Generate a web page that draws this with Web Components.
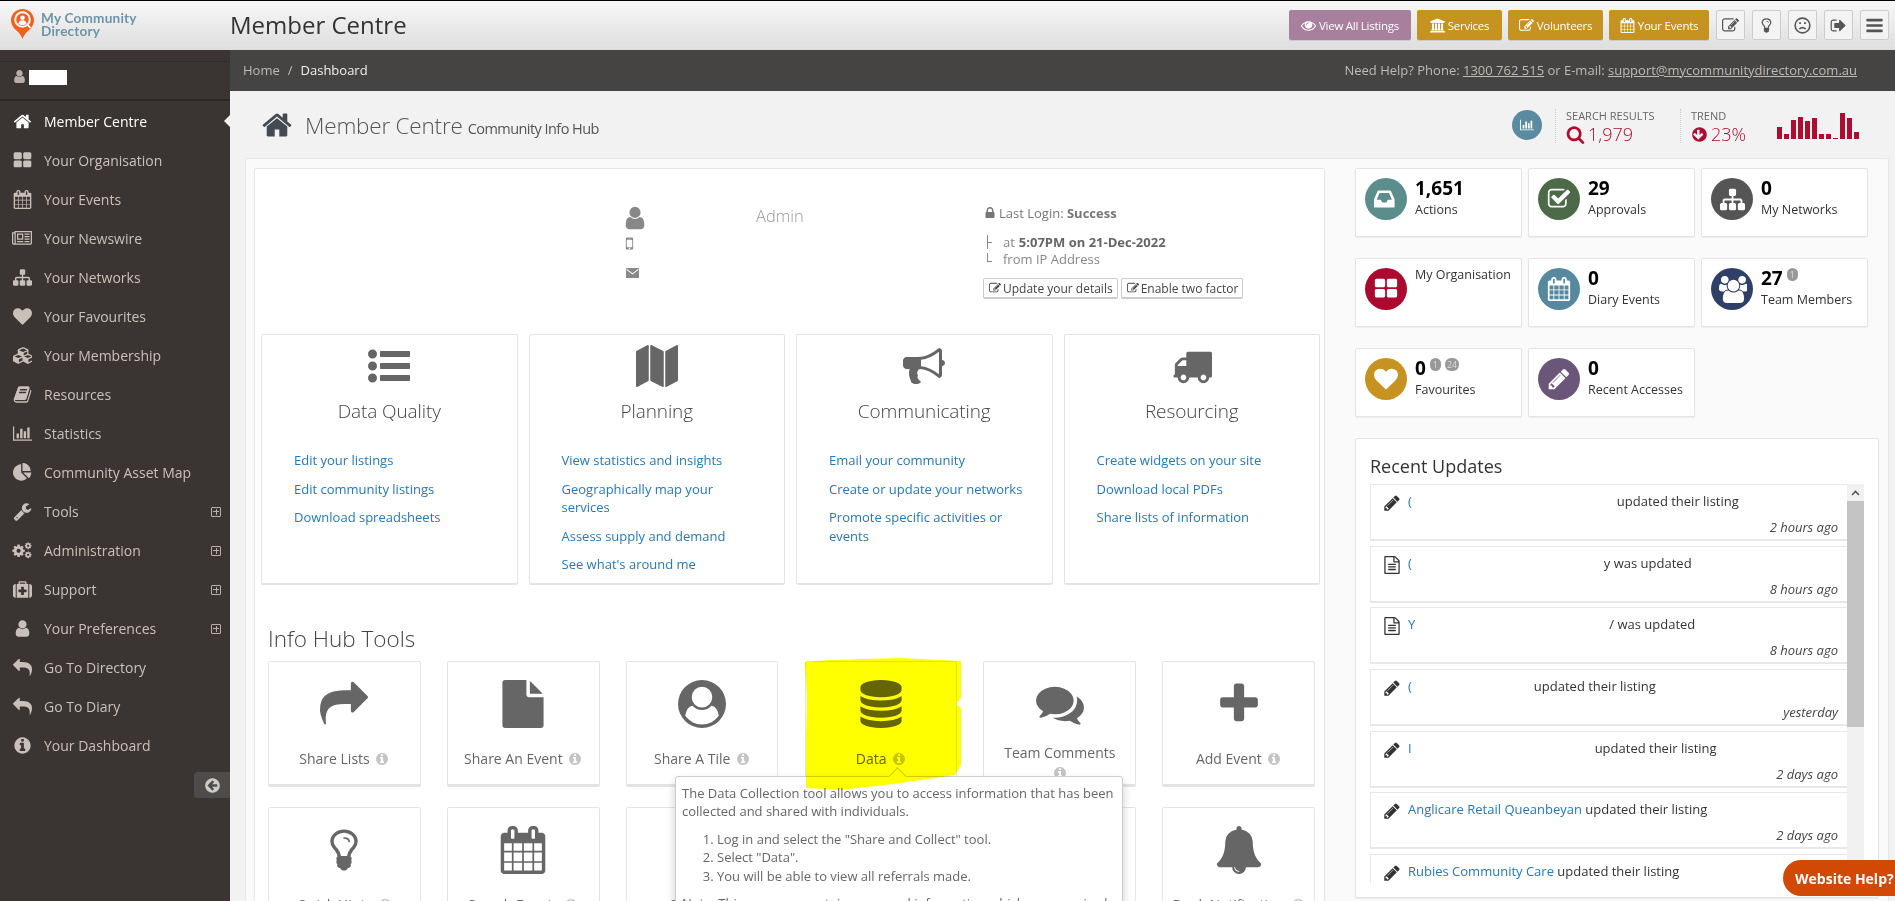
<!DOCTYPE html>
<html lang="en"><head><meta charset="utf-8"><title>Member Centre</title>
<style>
html,body{margin:0;padding:0;background:#f1f1f1;overflow:hidden}
body{font-family:"Open Sans","Liberation Sans",sans-serif;font-size:13px;color:#555}
</style></head><body>
<mc-app>
  <mc-header slot="header">
    <mc-hbtn color="#a97f9e" icon="eye" w="122">View All Listings</mc-hbtn>
    <mc-hbtn color="#c69220" icon="university" w="85">Services</mc-hbtn>
    <mc-hbtn color="#c69220" icon="edit" w="95">Volunteers</mc-hbtn>
    <mc-hbtn color="#c69220" icon="calendar" w="100">Your Events</mc-hbtn>
    <mc-ibtn icon="edit"></mc-ibtn><mc-ibtn icon="bulb"></mc-ibtn><mc-ibtn icon="frown"></mc-ibtn><mc-ibtn icon="signout"></mc-ibtn><mc-ibtn icon="bars"></mc-ibtn>
  </mc-header>
  <mc-sidebar slot="side">
    <mc-nav icon="home" active>Member Centre</mc-nav>
    <mc-nav icon="thlarge">Your Organisation</mc-nav>
    <mc-nav icon="calendar">Your Events</mc-nav>
    <mc-nav icon="news">Your Newswire</mc-nav>
    <mc-nav icon="sitemap">Your Networks</mc-nav>
    <mc-nav icon="heart">Your Favourites</mc-nav>
    <mc-nav icon="cubes">Your Membership</mc-nav>
    <mc-nav icon="book">Resources</mc-nav>
    <mc-nav icon="chart">Statistics</mc-nav>
    <mc-nav icon="pie">Community Asset Map</mc-nav>
    <mc-nav icon="wrench" plus>Tools</mc-nav>
    <mc-nav icon="cogs" plus>Administration</mc-nav>
    <mc-nav icon="medkit" plus>Support</mc-nav>
    <mc-nav icon="user" plus>Your Preferences</mc-nav>
    <mc-nav icon="reply">Go To Directory</mc-nav>
    <mc-nav icon="reply">Go To Diary</mc-nav>
    <mc-nav icon="info">Your Dashboard</mc-nav>
  </mc-sidebar>
  <mc-crumbs slot="main"></mc-crumbs>
  <mc-pagehead slot="main"></mc-pagehead>
  <mc-panel slot="main">
    <mc-card>
      <mc-userinfo></mc-userinfo>
      <mc-features>
        <mc-feature icon="list" title="Data Quality">
          <a>Edit your listings</a><a>Edit community listings</a><a>Download spreadsheets</a>
        </mc-feature>
        <mc-feature icon="map" title="Planning">
          <a>View statistics and insights</a><a>Geographically map your services</a><a>Assess supply and demand</a><a>See what's around me</a>
        </mc-feature>
        <mc-feature icon="bullhorn" title="Communicating">
          <a>Email your community</a><a>Create or update your networks</a><a>Promote specific activities or events</a>
        </mc-feature>
        <mc-feature icon="truck" title="Resourcing">
          <a>Create widgets on your site</a><a>Download local PDFs</a><a>Share lists of information</a>
        </mc-feature>
      </mc-features>
      <mc-tools heading="Info Hub Tools">
        <mc-tile icon="share">Share Lists</mc-tile>
        <mc-tile icon="file">Share An Event</mc-tile>
        <mc-tile icon="usercircle">Share A Tile</mc-tile>
        <mc-tile icon="database">Data</mc-tile>
        <mc-tile icon="comments" wrap>Team Comments</mc-tile>
        <mc-tile icon="plus">Add Event</mc-tile>
        <mc-tile icon="bulb">Quick Hints</mc-tile>
        <mc-tile icon="calendar">Search Events</mc-tile>
        <mc-tile icon="search">Search</mc-tile>
        <mc-tile icon="file"></mc-tile>
        <mc-tile icon="file"></mc-tile>
        <mc-tile icon="bell">Book Notification</mc-tile>
      </mc-tools>
    </mc-card>
    <mc-rightcol>
      <mc-stats>
        <mc-stat color="#5b8d8c" icon="inbox" num="1,651">Actions</mc-stat>
        <mc-stat color="#4c6a47" icon="check" num="29">Approvals</mc-stat>
        <mc-stat color="#555" icon="sitemap" num="0">My Networks</mc-stat>
        <mc-stat color="#ab0a2e" icon="thlarge">My Organisation</mc-stat>
        <mc-stat color="#56899f" icon="calendar" num="0">Diary Events</mc-stat>
        <mc-stat color="#2f4068" icon="users" num="27" badges="1">Team Members</mc-stat>
        <mc-stat color="#c69220" icon="heart" num="0" badges="1,24">Favourites</mc-stat>
        <mc-stat color="#6a5678" icon="pencil" num="0">Recent Accesses</mc-stat>
      </mc-stats>
      <mc-recent heading="Recent Updates">
        <mc-update icon="pencil" lead="(" gap="205" time="2 hours ago">updated their listing</mc-update>
        <mc-update icon="filetext" lead="(" gap="192" time="8 hours ago">y was updated</mc-update>
        <mc-update icon="filetext" lead="Y" gap="194" time="8 hours ago">/ was updated</mc-update>
        <mc-update icon="pencil" lead="(" gap="122" time="yesterday">updated their listing</mc-update>
        <mc-update icon="pencil" lead="I" gap="183" time="2 days ago">updated their listing</mc-update>
        <mc-update icon="pencil" link="Anglicare Retail Queanbeyan" time="2 days ago">updated their listing</mc-update>
        <mc-update icon="pencil" link="Rubies Community Care">updated their listing</mc-update>
      </mc-recent>
    </mc-rightcol>
  </mc-panel>
  <mc-tooltip slot="over">
    <p>The Data Collection tool allows you to access information that has been collected and shared with individuals.</p>
    <ol><li>Log in and select the "Share and Collect" tool.</li><li>Select "Data".</li><li>You will be able to view all referrals made.</li></ol>
    <p>Note: This message contains personal information which was required</p>
  </mc-tooltip>
  <mc-help slot="over">Website Help?</mc-help>
  <mc-highlight slot="over"></mc-highlight>
</mc-app>
<script>
const P={
home:"M1472 992v480q0 26-19 45t-45 19h-384v-384h-256v384h-384q-26 0-45-19t-19-45v-480q0-1 .5-3t.5-3l575-474 575 474q1 2 1 6zm223-69l-62 74q-8 9-21 11h-3q-13 0-21-7l-692-577-692 577q-12 8-24 7-13-2-21-11l-62-74q-8-10-7-23.500t11-21.500l719-599q32-26 76-26t76 26l244 204v-195q0-14 9-23t23-9h192q14 0 23 9t9 23v408l219 182q10 8 11 21.500t-7 23.500z",
user:"M1536 1399q0 109-62.500 187t-150.500 78h-854q-88 0-150.500-78t-62.500-187q0-85 8.500-160.500t31.500-152 58.500-131 94-89 134.500-34.500q131 128 313 128t313-128q76 0 134.500 34.500t94 89 58.500 131 31.500 152 8.500 160.500zm-256-887q0 159-112.500 271.500t-271.500 112.500-271.500-112.500-112.500-271.500 112.500-271.500 271.500-112.500 271.500 112.500 112.500 271.500z",
thlarge:"M832 1024v384q0 52-38 90t-90 38h-512q-52 0-90-38t-38-90v-384q0-52 38-90t90-38h512q52 0 90 38t38 90zm0-768v384q0 52-38 90t-90 38h-512q-52 0-90-38t-38-90v-384q0-52 38-90t90-38h512q52 0 90 38t38 90zm896 768v384q0 52-38 90t-90 38h-512q-52 0-90-38t-38-90v-384q0-52 38-90t90-38h512q52 0 90 38t38 90zm0-768v384q0 52-38 90t-90 38h-512q-52 0-90-38t-38-90v-384q0-52 38-90t90-38h512q52 0 90 38t38 90z",
calendar:"M192 1664h288v-288h-288v288zm352 0h320v-288h-320v288zm-352-352h288v-320h-288v320zm352 0h320v-320h-320v320zm-352-384h288v-288h-288v288zm736 736h320v-288h-320v288zm-384-736h320v-288h-320v288zm768 736h288v-288h-288v288zm-384-352h320v-320h-320v320zm-352-864v-288q0-13-9.500-22.500t-22.500-9.500h-64q-13 0-22.500 9.500t-9.500 22.500v288q0 13 9.500 22.500t22.500 9.500h64q13 0 22.500-9.500t9.500-22.500zm736 864h288v-320h-288v320zm-384-384h320v-288h-320v288zm384 0h288v-288h-288v288zm32-480v-288q0-13-9.500-22.500t-22.500-9.500h-64q-13 0-22.500 9.500t-9.500 22.500v288q0 13 9.500 22.500t22.500 9.500h64q13 0 22.500-9.500t9.500-22.500zm384-64v1280q0 52-38 90t-90 38h-1408q-52 0-90-38t-38-90v-1280q0-52 38-90t90-38h128v-96q0-66 47-113t113-47h64q66 0 113 47t47 113v96h384v-96q0-66 47-113t113-47h64q66 0 113 47t47 113v96h128q52 0 90 38t38 90z",
heart:"M896 1664q-26 0-44-18l-624-602q-10-8-27.500-26t-55.500-65.500-68-97.500-53.500-121-23.500-138q0-220 127-344t351-124q62 0 126.500 21.500t120 58 95.500 68.500 76 68q36-36 76-68t95.500-68.500 120-58 126.500-21.500q224 0 351 124t127 344q0 221-229 450l-623 600q-18 18-44 18z",
chart:"M640 896v512h-256v-512h256zm384-512v1024h-256v-1024h256zm1024 1152v128h-2048v-1536h128v1408h1920zm-640-896v768h-256v-768h256zm384-384v1152h-256v-1152h256z",
pie:"M768 890l546 546q-106 108-247.500 168t-298.500 60q-209 0-385.500-103t-279.500-279.500-103-385.500 103-385.500 279.500-279.500 385.500-103v762zm187 2h773q0 157-60 298.500t-168 247.500zm709-128h-768v-768q209 0 385.500 103t279.500 279.500 103 385.500z",
wrench:"M448 1472q0-26-19-45t-45-19-45 19-19 45 19 45 45 19 45-19 19-45zm644-420l-682 682q-37 37-90 37-52 0-91-37l-106-108q-38-36-38-90 0-53 38-91l681-681q39 98 114.500 173.500t173.500 114.500zm634-435q0 39-23 106-47 134-164.500 217.500t-258.500 83.500q-185 0-316.500-131.500t-131.500-316.500 131.500-316.500 316.500-131.500q58 0 121.500 16.500t107.500 46.500q16 11 16 28t-16 28l-293 169v224l193 107q5-3 79-48.500t135.500-81 70.500-35.500q15 0 23.500 10t8.500 25z",
share:"M1792 640q0 26-19 45l-512 512q-19 19-45 19t-45-19-19-45v-256h-224q-98 0-175.500 6t-154 21.500-133 42.500-105.500 69.500-80 101-48.500 138.500-17.500 181q0 55 5 123 0 6 2.500 23.500t2.500 26.500q0 15-8.500 25t-23.500 10q-16 0-28-17-7-9-13-22t-13.500-30-10.500-24q-127-285-127-451 0-199 53-333 162-403 875-403h224v-256q0-26 19-45t45-19 45 19l512 512q19 19 19 45z",
reply:"M1792 1120q0 166-127 451-3 7-10.500 24t-13.500 30-13 22q-12 17-28 17-15 0-23.500-10t-8.500-25q0-9 2.500-26.500t2.500-23.500q5-68 5-123 0-101-17.500-181t-48.500-138.500-80-101-105.500-69.500-133-42.500-154-21.500-175.500-6h-224v256q0 26-19 45t-45 19-45-19l-512-512q-19-19-19-45t19-45l512-512q19-19 45-19t45 19 19 45v256h224q713 0 875 403 53 134 53 333z",
info:"M1152 1376v-160q0-14-9-23t-23-9h-96v-512q0-14-9-23t-23-9h-320q-14 0-23 9t-9 23v160q0 14 9 23t23 9h96v320h-96q-14 0-23 9t-9 23v160q0 14 9 23t23 9h448q14 0 23-9t9-23zm-128-896v-160q0-14-9-23t-23-9h-192q-14 0-23 9t-9 23v160q0 14 9 23t23 9h192q14 0 23-9t9-23zm640 416q0 209-103 385.500t-279.500 279.500-385.500 103-385.500-103-279.500-279.500-103-385.500 103-385.500 279.500-279.500 385.500-103 385.500 103 279.500 279.500 103 385.500z",
plus:"M1600 736v192q0 40-28 68t-68 28h-416v416q0 40-28 68t-68 28h-192q-40 0-68-28t-28-68v-416h-416q-40 0-68-28t-28-68v-192q0-40 28-68t68-28h416v-416q0-40 28-68t68-28h192q40 0 68 28t28 68v416h416q40 0 68 28t28 68z",
file:"M1152 512v-472q22 14 36 28l408 408q14 14 28 36h-472zm-128 32q0 40 28 68t68 28h544v1056q0 40-28 68t-68 28h-1344q-40 0-68-28t-28-68v-1600q0-40 28-68t68-28h800v544z",
database:"M896 768q237 0 443-43t325-127v170q0 69-103 128t-280 93.500-385 34.500-385-34.500-280-93.500-103-128v-170q119 84 325 127t443 43zm0 768q237 0 443-43t325-127v170q0 69-103 128t-280 93.500-385 34.500-385-34.500-280-93.500-103-128v-170q119 84 325 127t443 43zm0-384q237 0 443-43t325-127v170q0 69-103 128t-280 93.500-385 34.500-385-34.500-280-93.500-103-128v-170q119 84 325 127t443 43zm0-1152q208 0 385 34.500t280 93.500 103 128v128q0 69-103 128t-280 93.500-385 34.500-385-34.500-280-93.500-103-128v-128q0-69 103-128t280-93.500 385-34.500z",
bell:"M912 1696q0-16-16-16-59 0-101.500-42.500t-42.500-101.500q0-16-16-16t-16 16q0 73 51.500 124.500t124.500 51.500q16 0 16-16zm816-288q0 52-38 90t-90 38h-448q0 106-75 181t-181 75-181-75-75-181h-448q-52 0-90-38t-38-90q50-42 91-88t85-119.500 74.500-158.500 50-206 19.500-260q0-152 117-282.500t307-158.500q-8-19-8-39 0-40 28-68t68-28 68 28 28 68q0 20-8 39 190 28 307 158.500t117 282.500q0 139 19.500 260t50 206 74.500 158.500 85 119.500 91 88z",
bulb:"M1120 576q0 13-9.500 22.500t-22.500 9.500-22.500-9.500-9.500-22.500q0-46-54-71t-106-25q-13 0-22.500-9.500t-9.500-22.500 9.500-22.500 22.500-9.500q50 0 99.500 16t87 54 37.500 90zm160 0q0-72-34.500-134t-90-101.500-123-62-136.500-22.500-136.500 22.500-123 62-90 101.500-34.500 134q0 101 68 180 10 11 30.500 33t30.500 33q128 153 141 298h228q13-145 141-298 10-11 30.500-33t30.500-33q68-79 68-180zm128 0q0 155-103 268-45 49-74.500 87t-59.500 95.500-34 107.500q47 28 47 82 0 37-25 64 25 27 25 64 0 52-45 81 13 23 13 47 0 46-31.500 71t-77.500 25q-20 44-60 70t-87 26-87-26-60-70q-46 0-77.500-25t-31.500-71q0-24 13-47-45-29-45-81 0-37 25-64-25-27-25-64 0-54 47-82-4-50-34-107.500t-59.500-95.500-74.500-87q-103-113-103-268 0-99 44.500-184.500t117-142 164-89 186.500-32.500 186.500 32.500 164 89 117 142 44.500 184.500z",
comments:"M1408 768q0 139-94 257t-256.500 186.500-353.500 68.500q-86 0-176-16-124 88-278 128-36 9-86 16h-3q-11 0-20.500-8t-11.500-21q-1-3-1-6.500t.5-6.500 2-6l2.500-5 3.500-5.500 4-5 4.500-5 4-4.500q5-6 23-25t26-29.500 22.500-29 25-38.500 20.500-44q-124-72-195-177t-71-224q0-139 94-257t256.500-186.500 353.500-68.500 353.500 68.500 256.500 186.500 94 257zm384 256q0 120-71 224.500t-195 176.500q10 24 20.500 44t25 38.500 22.500 29 26 29.500 23 25q1 1 4 4.500t4.500 5 4 5 3.500 5.500l2.500 5 2 6 .5 6.500-1 6.500q-3 14-13 22t-22 7q-50-7-86-16-154-40-278-128-90 16-176 16-271 0-472-132 58 4 88 4 161 0 309-45t264-129q125-92 192-212t67-254q0-77-23-152 129 71 204 178t75 230z",
usercircle:"M1523 1339q-22-155-87.500-257.500t-184.500-118.500q-67 74-159.500 115.500t-195.500 41.500-195.500-41.500-159.500-115.500q-119 16-184.500 118.500t-87.500 257.500q106 150 271 237.500t356 87.500 356-87.500 271-237.500zm-243-699q0-159-112.500-271.500t-271.500-112.500-271.500 112.500-112.500 271.500 112.500 271.500 271.500 112.500 271.500-112.500 112.500-271.500zm512 256q0 182-71 347.500t-190.500 286-285.500 191.500-349 71q-182 0-348-71t-286-191-191-286-71-348 71-348 191-286 286-191 348-71 348 71 286 191 191 286 71 348z",
truck:"M640 1408q0-52-38-90t-90-38-90 38-38 90 38 90 90 38 90-38 38-90zm-384-512h384v-256h-158q-13 0-22 9l-195 195q-9 9-9 22v30zm1280 512q0-52-38-90t-90-38-90 38-38 90 38 90 90 38 90-38 38-90zm256-1088v1024q0 15-4 26.500t-13.500 18.500-16.500 11.500-23.500 6-22.500 2-25.500 0-22.500-.5q0 106-75 181t-181 75-181-75-75-181h-384q0 106-75 181t-181 75-181-75-75-181h-64q-3 0-22.500.5t-25.500 0-22.500-2-23.500-6-16.500-11.500-13.500-18.500-4-26.500q0-26 19-45t45-19v-320q0-8-.5-35t0-38 2.500-34.500 6.500-37 14-30.500 22.500-30l198-198q19-19 50.500-32t58.500-13h160v-192q0-26 19-45t45-19h1024q26 0 45 19t19 45z",
list:"M384 1408q0 80-56 136t-136 56-136-56-56-136 56-136 136-56 136 56 56 136zm0-512q0 80-56 136t-136 56-136-56-56-136 56-136 136-56 136 56 56 136zm1408 416v192q0 13-9.500 22.500t-22.500 9.500h-1216q-13 0-22.500-9.500t-9.500-22.500v-192q0-13 9.500-22.500t22.500-9.500h1216q13 0 22.500 9.500t9.500 22.500zm-1408-928q0 80-56 136t-136 56-136-56-56-136 56-136 136-56 136 56 56 136zm1408 416v192q0 13-9.500 22.500t-22.500 9.500h-1216q-13 0-22.500-9.500t-9.500-22.500v-192q0-13 9.500-22.500t22.500-9.500h1216q13 0 22.500 9.500t9.500 22.500zm0-512v192q0 13-9.500 22.500t-22.500 9.500h-1216q-13 0-22.500-9.500t-9.500-22.500v-192q0-13 9.500-22.500t22.500-9.500h1216q13 0 22.500 9.500t9.500 22.500z",
map:"M512 0q13 0 22.500 9.500t9.500 22.500v1472q0 20-17 28l-480 256q-7 4-15 4-13 0-22.500-9.500t-9.500-22.500v-1472q0-20 17-28l480-256q7-4 15-4zm1248 0q13 0 22.500 9.500t9.500 22.500v1472q0 20-17 28l-480 256q-7 4-15 4-13 0-22.500-9.500t-9.500-22.500v-1472q0-20 17-28l480-256q7-4 15-4zm-1120 0q8 0 14 3l512 256q18 10 18 29v1472q0 13-9.500 22.500t-22.500 9.500q-8 0-14-3l-512-256q-18-10-18-29v-1472q0-13 9.500-22.500t22.500-9.500z",
bullhorn:"M1664 640q53 0 90.500 37.500t37.500 90.500-37.500 90.500-90.500 37.500v384q0 52-38 90t-90 38q-417-347-812-380-58 19-91 66t-31 100.500 40 92.500q-20 33-23 65.500t6 58 33.500 55 48 50 61.500 50.500q-29 58-111.500 83t-168.500 11.500-132-55.500q-7-23-29.500-87.500t-32-94.500-23-89-15-101 3.500-98.500 22-110.500h-122q-66 0-113-47t-47-113v-192q0-66 47-113t113-47h480q435 0 896-384 52 0 90 38t38 90v384zm-128 604v-954q-394 302-768 343v270q377 42 768 341z",
pencil:"M491 1536l91-91-235-235-91 91v107h128v128h107zm523-928q0-22-22-22-10 0-17 7l-542 542q-7 7-7 17 0 22 22 22 10 0 17-7l542-542q7-7 7-17zm-54-192l416 416-832 832h-416v-416zm683 96q0 53-37 90l-166 166-416-416 166-165q36-38 90-38 53 0 91 38l235 234q37 39 37 91z",
edit:"M888 1184l116-116-152-152-116 116v56h96v96h56zm440-720q-16-16-33 1l-350 350q-17 17-1 33t33-1l350-350q17-17 1-33zm80 594v190q0 119-84.500 203.500t-203.500 84.500h-832q-119 0-203.500-84.500t-84.500-203.500v-832q0-119 84.500-203.500t203.500-84.500h832q63 0 117 25 15 7 18 23 3 17-9 29l-49 49q-14 14-32 8-23-6-45-6h-832q-66 0-113 47t-47 113v832q0 66 47 113t113 47h832q66 0 113-47t47-113v-126q0-13 9-22l64-64q15-15 35-7t20 29zm-96-738l288 288-672 672h-288v-288zm444 132l-92 92-288-288 92-92q27-27 68-27t68 27l152 152q27 27 27 68t-27 68z",
eye:"M1664 960q-152-236-381-353 61 104 61 225 0 185-131.500 316.500t-316.500 131.500-316.500-131.500-131.500-316.500q0-121 61-225-229 117-381 353 133 205 333.500 326.500t434.500 121.500 434.500-121.500 333.500-326.500zm-720-384q0-20-14-34t-34-14q-125 0-214.500 89.500t-89.500 214.500q0 20 14 34t34 14 34-14 14-34q0-86 61-147t147-61q20 0 34-14t14-34zm848 384q0 34-20 69-140 230-376.500 368.500t-499.500 138.500-499.500-139-376.500-368q-20-35-20-69t20-69q140-229 376.500-368t499.500-139 499.500 139 376.500 368q20 35 20 69z",
check:"M1472 930v318q0 119-84.500 203.500t-203.500 84.500h-832q-119 0-203.500-84.500t-84.500-203.500v-832q0-119 84.500-203.500t203.500-84.500h832q63 0 117 25 15 7 18 23 3 16-9 28l-49 49q-10 10-23 10-3 0-9-2-23-6-45-6h-832q-66 0-113 47t-47 113v832q0 66 47 113t113 47h832q66 0 113-47t47-113v-254q0-13 9-22l64-64q10-10 23-10 6 0 12 3 20 8 20 29zm231-489l-814 814q-24 24-57 24t-57-24l-430-430q-24-24-24-57t24-57l110-110q24-24 57-24t57 24l263 263 647-647q24-24 57-24t57 24l110 110q24 24 24 57t-24 57z",
sitemap:"M1792 1248v320q0 40-28 68t-68 28h-320q-40 0-68-28t-28-68v-320q0-40 28-68t68-28h96v-192h-512v192h96q40 0 68 28t28 68v320q0 40-28 68t-68 28h-320q-40 0-68-28t-28-68v-320q0-40 28-68t68-28h96v-192h-512v192h96q40 0 68 28t28 68v320q0 40-28 68t-68 28h-320q-40 0-68-28t-28-68v-320q0-40 28-68t68-28h96v-192q0-52 38-90t90-38h512v-192h-96q-40 0-68-28t-28-68v-320q0-40 28-68t68-28h320q40 0 68 28t28 68v320q0 40-28 68t-68 28h-96v192h512q52 0 90 38t38 90v192h96q40 0 68 28t28 68z",
users:"M657 896q-162 5-265 128h-134q-82 0-138-40.500t-56-118.500q0-353 124-353 6 0 43.500 21t97.500 42.500 119 21.500q67 0 133-23-5 37-5 66 0 139 81 256zm1071 637q0 120-73 189.500t-194 69.500h-874q-121 0-194-69.500t-73-189.500q0-53 3.500-103.500t14-109 26.500-108.500 43-97.500 62-81 85.500-53.500 111.500-20q10 0 43 21.500t73 48 107 48 135 21.500 135-21.500 107-48 73-48 43-21.500q61 0 111.500 20t85.500 53.500 62 81 43 97.500 26.500 108.500 14 109 3.500 103.500zm-1024-1277q0 106-75 181t-181 75-181-75-75-181 75-181 181-75 181 75 75 181zm704 384q0 159-112.500 271.500t-271.500 112.500-271.500-112.500-112.500-271.500 112.500-271.500 271.500-112.500 271.500 112.500 112.500 271.500zm576 225q0 78-56 118.500t-138 40.500h-134q-103-123-265-128 81-117 81-256 0-29-5-66 66 23 133 23 59 0 119-21.500t97.500-42.500 43.500-21q124 0 124 353zm-128-609q0 106-75 181t-181 75-181-75-75-181 75-181 181-75 181 75 75 181z",
inbox:"M1023 960h316q-1-3-2.500-8.500t-2.500-7.500l-212-496h-708l-212 496q-1 3-2.500 8.500t-2.500 7.500h316l95 192h320zm513 30v482q0 26-19 45t-45 19h-1408q-26 0-45-19t-19-45v-482q0-62 25-123l238-552q10-25 36.500-42t52.500-17h832q26 0 52.500 17t36.500 42l238 552q25 61 25 123z",
news:"M1024 512h-384v384h384v-384zm128 640v128h-640v-128h640zm0-768v640h-640v-640h640zm640 768v128h-512v-128h512zm0-256v128h-512v-128h512zm0-256v128h-512v-128h512zm0-256v128h-512v-128h512zm-1536 960v-960h-128v960q0 26 19 45t45 19 45-19 19-45zm1664 0v-1088h-1536v1088q0 33-11 64h1483q26 0 45-19t19-45zm128-1216v1216q0 80-56 136t-136 56h-1664q-80 0-136-56t-56-136v-1088h256v-128h1792z",
cubes:"M640 1632l384-192v-314l-384 164v342zm-64-454l404-173-404-173-404 173zm1088 454l384-192v-314l-384 164v342zm-64-454l404-173-404-173-404 173zm-448-293l384-165v-266l-384 164v267zm-64-379l441-189-441-189-441 189zm1088 518v416q0 36-19 67t-52 47l-448 224q-25 14-57 14t-57-14l-448-224q-4-2-7-4-2 2-7 4l-448 224q-25 14-57 14t-57-14l-448-224q-33-16-52-47t-19-67v-416q0-38 21.500-70t56.500-48l434-186v-400q0-38 21.500-70t56.500-48l448-192q23-10 50-10t50 10l448 192q35 16 56.500 48t21.500 70v400l434 186q36 16 57 48t21 70z",
book:"M1703 478q40 57 18 129l-275 906q-19 64-76.500 107.500t-122.500 43.500h-923q-77 0-148.500-53.500t-99.500-131.500q-24-67-2-127 0-4 3-27t4-37q1-8-3-21.500t-3-19.500q2-11 8-21t16.500-23.500 16.500-23.500q23-38 45-91.500t30-91.500q3-10 .5-30t-.5-28q3-11 17-28t17-23q21-36 42-92t25-90q1-9-2.500-32t.5-28q4-13 22-30.500t22-22.500q19-26 42.500-84.500t27.500-96.500q1-8-3-25.500t-2-26.500q2-8 9-18t18-23 17-21q8-12 16.500-30.500t15-35 16-36 19.500-32 26.500-23.500 36-11.500 47.500 5.500l-1 3q38-9 51-9h761q74 0 114 56t18 130l-274 906q-36 119-71.500 153.500t-128.500 34.500h-869q-27 0-38 15-11 16-1 43 24 70 144 70h923q29 0 56-15.500t35-41.500l300-987q7-22 5-57 38 15 59 43zm-1064 2q-4 13 2 22.500t20 9.500h608q13 0 25.500-9.500t16.500-22.500l21-64q4-13-2-22.500t-20-9.500h-608q-13 0-25.500 9.500t-16.500 22.500zm-83 256q-4 13 2 22.500t20 9.500h608q13 0 25.500-9.500t16.500-22.500l21-64q4-13-2-22.500t-20-9.500h-608q-13 0-25.500 9.500t-16.500 22.500z",
cog:"M1152 896q0-106-75-181t-181-75-181 75-75 181 75 181 181 75 181-75 75-181zm512-109v222q0 12-8 23t-20 13l-185 28q-19 54-39 91 35 50 107 138 10 12 10 25t-9 23q-27 37-99 108t-94 71q-12 0-26-9l-138-108q-44 23-91 38-16 136-29 186-7 28-36 28h-222q-14 0-24.500-8.500t-11.500-21.500l-28-184q-49-16-90-37l-141 107q-10 9-25 9-14 0-25-11-126-114-165-168-7-10-7-23 0-12 8-23 15-21 51-66.500t54-70.500q-27-50-41-99l-183-27q-13-2-21-12.500t-8-23.500v-222q0-12 8-23t19-13l186-28q14-46 39-92-40-57-107-138-10-12-10-24 0-10 9-23 26-36 98.500-107.500t94.500-71.500q13 0 26 10l138 107q44-23 91-38 16-136 29-186 7-28 36-28h222q14 0 24.500 8.500t11.500 21.500l28 184q49 16 90 37l142-107q9-9 24-9 13 0 25 10 129 119 165 170 7 8 7 22 0 12-8 23-15 21-51 66.500t-54 70.500q26 50 41 98l183 28q13 2 21 12.500t8 23.500z",
medkit:"M1280 1120v-192q0-14-9-23t-23-9h-224v-224q0-14-9-23t-23-9h-192q-14 0-23 9t-9 23v224h-224q-14 0-23 9t-9 23v192q0 14 9 23t23 9h224v224q0 14 9 23t23 9h192q14 0 23-9t9-23v-224h224q14 0 23-9t9-23zm-640-768h512v-128h-512v128zm-384 32v1280h-32q-92 0-158-66t-66-158v-832q0-92 66-158t158-66h32zm1184 0v1280h-1088v-1280h160v-160q0-40 28-68t68-28h576q40 0 68 28t28 68v160h160zm352 224v832q0 92-66 158t-158 66h-32v-1280h32q92 0 158 66t66 158z",
acleft:"M1408 960v-128q0-26-19-45t-45-19h-502l189-189q19-19 19-45t-19-45l-91-91q-18-18-45-18t-45 18l-362 362-91 91q-18 18-18 45t18 45l91 91 362 362q18 18 45 18t45-18l91-91q18-18 18-45t-18-45l-189-189h502q26 0 45-19t19-45zm256-64q0 209-103 385.500t-279.500 279.500-385.500 103-385.500-103-279.500-279.500-103-385.500 103-385.500 279.500-279.500 385.500-103 385.500 103 279.500 279.500 103 385.500z",
acdown:"M1284 897q0-27-18-45l-91-91q-18-18-45-18t-45 18l-189 189v-502q0-26-19-45t-45-19h-128q-26 0-45 19t-19 45v502l-189-189q-19-19-45-19t-45 19l-91 91q-18 18-18 45t18 45l362 362 91 91q18 18 45 18t45-18l91-91 362-362q18-18 18-45zm380-1q0 209-103 385.500t-279.500 279.500-385.500 103-385.500-103-279.500-279.500-103-385.500 103-385.500 279.500-279.500 385.500-103 385.500 103 279.500 279.500 103 385.500z",
search:"M1216 832q0-185-131.500-316.500t-316.500-131.500-316.500 131.500-131.500 316.500 131.500 316.500 316.500 131.500 316.500-131.500 131.500-316.500zm512 832q0 52-38 90t-90 38q-54 0-90-38l-343-342q-179 124-399 124-143 0-273.500-55.500t-225-150-150-225-55.500-273.500 55.500-273.500 150-225 225-150 273.500-55.500 273.500 55.500 225 150 150 225 55.500 273.500q0 220-124 399l343 343q37 37 37 90z",
university:"M960 0l960 384v128h-128q0 26-20.500 45t-48.500 19h-1526q-28 0-48.500-19t-20.500-45h-128v-128zm-704 640h256v768h128v-768h256v768h128v-768h256v768h128v-768h256v768h59q28 0 48.500 19t20.500 45v64h-1664v-64q0-26 20.500-45t48.500-19h59v-768zm1595 960q28 0 48.500 19t20.500 45v128h-1920v-128q0-26 20.500-45t48.500-19h1782z",
signout:"M704 1440q0 4 1 20t.5 26.500-3 23.500-10 19.500-20.500 6.500h-320q-119 0-203.500-84.500t-84.500-203.500v-704q0-119 84.500-203.500t203.500-84.500h320q13 0 22.500 9.500t9.500 22.500q0 4 1 20t.5 26.500-3 23.500-10 19.500-20.500 6.500h-320q-66 0-113 47t-47 113v704q0 66 47 113t113 47h312l11.500 1 11.500 3 8 5.500 7 9 2 13.500zm928-544q0 26-19 45l-544 544q-19 19-45 19t-45-19-19-45v-288h-448q-26 0-45-19t-19-45v-384q0-26 19-45t45-19h448v-288q0-26 19-45t45-19 45 19l544 544q19 19 19 45z",
bars:"M1664 1344v128q0 26-19 45t-45 19h-1408q-26 0-45-19t-19-45v-128q0-26 19-45t45-19h1408q26 0 45 19t19 45zm0-512v128q0 26-19 45t-45 19h-1408q-26 0-45-19t-19-45v-128q0-26 19-45t45-19h1408q26 0 45 19t19 45zm0-512v128q0 26-19 45t-45 19h-1408q-26 0-45-19t-19-45v-128q0-26 19-45t45-19h1408q26 0 45 19t19 45z",
lock:"M640 768h512v-192q0-106-75-181t-181-75-181 75-75 181v192zm832 96v576q0 40-28 68t-68 28h-960q-40 0-68-28t-28-68v-576q0-40 28-68t68-28h32v-192q0-184 132-316t316-132 316 132 132 316v192h32q40 0 68 28t28 68z",
mobile:"M976 1408q0-33-23.500-56.500t-56.500-23.500-56.500 23.500-23.500 56.500 23.500 56.500 56.500 23.500 56.500-23.500 23.500-56.500zm208-160v-704q0-13-9.500-22.500t-22.500-9.500h-512q-13 0-22.500 9.500t-9.500 22.500v704q0 13 9.500 22.500t22.500 9.500h512q13 0 22.500-9.500t9.500-22.500zm-192-848q0-16-16-16h-160q-16 0-16 16t16 16h160q16 0 16-16zm288-16v1024q0 52-38 90t-90 38h-512q-52 0-90-38t-38-90v-1024q0-52 38-90t90-38h512q52 0 90 38t38 90z",
filetext:"M1596 380q28 28 48 76t20 88v1152q0 40-28 68t-68 28h-1344q-40 0-68-28t-28-68v-1600q0-40 28-68t68-28h896q40 0 88 20t76 48zm-444-244v376h376q-10-29-22-41l-313-313q-12-12-41-22zm384 1528v-1024h-416q-40 0-68-28t-28-68v-416h-768v1536h1280zm-1024-864q0-14 9-23t23-9h704q14 0 23 9t9 23v64q0 14-9 23t-23 9h-704q-14 0-23-9t-9-23v-64zm736 224q14 0 23 9t9 23v64q0 14-9 23t-23 9h-704q-14 0-23-9t-9-23v-64q0-14 9-23t23-9h704zm0 256q14 0 23 9t9 23v64q0 14-9 23t-23 9h-704q-14 0-23-9t-9-23v-64q0-14 9-23t23-9h704z"
};
const VB={chart:"0 0 2048 1792",news:"0 0 2048 1792",cubes:"0 0 2048 1792",university:"0 0 1920 1792",users:"0 0 1920 1792"};
function svg(n,s,extra=""){
  if(n==="frown")return `<svg width="${s}" height="${s}" viewBox="0 0 24 24" fill="none" stroke="currentColor" stroke-width="2.2" ${extra}><circle cx="12" cy="12" r="10.4"/><path d="M7.5 17q4.500-4 9 0"/><path d="M8.500 7.500v2.500M15.500 7.500v2.500" stroke-width="2.600"/></svg>`;
  if(n==="mail")return `<svg width="${s}" height="${s*.8}" viewBox="0 0 20 16" ${extra}><rect width="20" height="16" rx="1.500" fill="currentColor"/><path d="M1 2l9 7 9-7" fill="none" stroke="#fff" stroke-width="1.600"/></svg>`;
  if(n==="cogs")return `<svg width="${s}" height="${s}" viewBox="0 0 2048 1792" fill="currentColor" ${extra}><g transform="translate(-60 240) scale(.82)"><path d="${P.cog}"/></g><g transform="translate(1250 60) scale(.45)"><path d="${P.cog}"/></g><g transform="translate(1250 980) scale(.45)"><path d="${P.cog}"/></g></svg>`;
  return `<svg width="${s}" height="${s}" viewBox="${VB[n]||"0 0 1792 1792"}" fill="currentColor" ${extra}><path d="${P[n]}" fill-rule="evenodd"/></svg>`;
}
function def(name,css,html){
  customElements.define(name,class extends HTMLElement{
    connectedCallback(){
      if(this.shadowRoot)return;
      const r=this.attachShadow({mode:"open"});
      r.innerHTML=`<style>${css}</style>`+(typeof html==="function"?html(this):html);
    }
  });
}
const A=(e,n,d="")=>e.getAttribute(n)??d;

def("mc-app",`:host{display:grid;grid-template-columns:230px 1665px;grid-template-rows:50px 851px;width:1895px;height:901px;overflow:hidden;position:relative;font-family:"Open Sans","Liberation Sans",sans-serif}
.h{grid-column:1/3;display:block}.s{display:block;min-height:0}.m{display:flex;flex-direction:column;min-height:0;background:#f2f2f2;overflow:hidden}`,
`<div class="h"><slot name="header"></slot></div><div class="s"><slot name="side"></slot></div><div class="m"><slot name="main"></slot></div><slot name="over"></slot>`);

def("mc-header",`:host{display:flex;box-sizing:border-box;height:50px;border-top:1px solid #000;background:linear-gradient(#f7f7f7,#dedede);align-items:center}
.logo{width:230px;flex:none;display:flex;align-items:center;height:100%;padding-left:11px;box-sizing:border-box;gap:7px}
.lt{font:700 13.6px/13px Lato,"Open Sans",sans-serif;color:#6d95a8;letter-spacing:.2px;margin-top:-2px}
h1{margin:0;font:400 24px/1 "Open Sans",sans-serif;color:#333;flex:1;margin-top:-2px}
.b{display:flex;gap:6px;padding-right:6px;margin-top:-1px;align-items:center}
::slotted(mc-ibtn){margin-left:1px}`,
`<div class="logo"><svg width="23" height="30" viewBox="0 0 23 30" style="margin-top:-3px"><path fill="#f2601f" d="M11.500 0C5 0 0 5 0 11.300c0 4.800 3 8.200 6 10.700 2.300 2 4.200 4.500 5.500 8 1.300-3.500 3.200-6 5.500-8 3-2.500 6-5.900 6-10.700C23 5 18 0 11.500 0z"/><circle cx="11.500" cy="10.500" r="7.300" fill="none" stroke="#fff" stroke-width="2"/><circle cx="11.500" cy="8.800" r="2.300" fill="#fff"/><path fill="#fff" d="M7.300 14.500c.6-2.400 2.200-3.300 4.200-3.300s3.600.9 4.200 3.300c-1.100 1-2.600 1.500-4.200 1.500s-3.100-.5-4.200-1.500z"/><path stroke="#fff" stroke-width="1.800" d="M16.500 15.800l3 3"/></svg><div class="lt">My Community<br>Directory</div></div><h1>Member Centre</h1><div class="b"><slot></slot></div>`);

def("mc-hbtn",`:host{display:flex;align-items:center;justify-content:center;gap:3px;box-sizing:border-box;height:30px;border-radius:2px;color:#fff;font-size:11.500px;letter-spacing:-.25px;white-space:nowrap;box-shadow:0 1px 0 rgba(0,0,0,.1)}`,
e=>`<style>:host{background:${A(e,"color")};width:${A(e,"w")}px}</style>${svg(A(e,"icon"),15)}<slot></slot>`);
def("mc-ibtn",`:host{display:flex;align-items:center;justify-content:center;box-sizing:border-box;width:29px;height:30px;border:1px solid #ccc;border-radius:2px;background:#f3f3f3;color:#555}`,
e=>svg(A(e,"icon"),A(e,"icon")==="bars"?19:17));

def("mc-sidebar",`:host{display:block;box-sizing:border-box;height:851px;background:#3a3533;position:relative;font-size:14px;padding-top:11px}
.u{box-sizing:border-box;height:40px;border-top:1px solid #302c2a;border-bottom:2px solid #2a2726;display:flex;align-items:flex-start;padding:7px 0 0 12px;color:#b7afa8;gap:2px}
.r{width:38px;height:15px;background:#fff;margin-top:1px}
.col{position:absolute;left:194px;top:722px;width:36px;height:26px;background:#4e4c4a;border-radius:4px 0 0 4px;display:flex;align-items:center;justify-content:center;color:#cfcac6}
.n{padding-top:.5px}`,
`<div class="u">${svg("user",15)}<div class="r"></div></div><div class="n"><slot></slot></div><div class="col">${svg("acleft",17)}</div>`);

def("mc-nav",`:host{display:flex;align-items:center;height:39px;box-sizing:border-box;padding-left:12px;color:#c9c1b9;font-size:14px;position:relative;white-space:nowrap}
.i{width:20px;flex:none;display:flex;justify-content:center;margin-right:12px}
:host([active]){color:#fff}
.a{position:absolute;right:0;top:13px;border:6.500px solid transparent;border-right:6px solid #f2f2f2;border-left:0}
.p{position:absolute;left:211px;top:15px;width:8px;height:8px;border:1px solid #b8b0a8;border-radius:1px;}
.p:before,.p:after{content:"";position:absolute;background:#b8b0a8}.p:before{left:1px;right:1px;top:3.500px;height:1px}.p:after{top:1px;bottom:1px;left:3.500px;width:1px}`,
e=>{const n=A(e,"icon");return `<span class="i">${svg(n,n==="news"?21:n==="cogs"?22:19)}</span><slot></slot>${e.hasAttribute("active")?'<span class="a"></span>':""}${e.hasAttribute("plus")?'<span class="p"></span>':""}`});

def("mc-crumbs",`:host{display:flex;flex:none;height:41px;box-sizing:border-box;align-items:center;justify-content:space-between;background:#464442;color:#bdbab7;font-size:13px;padding:0 38px 2px 13px;white-space:nowrap}
u{text-decoration:underline}b{font-weight:400;color:#eee}.s{margin:0 8px}`,
`<div>Home<span class="s">/</span><b>Dashboard</b></div><div>Need Help? Phone: <u>1300 762 515</u> or E-mail: <u>support@mycommunitydirectory.com.au</u></div>`);

def("mc-pagehead",`:host{display:flex;flex:none;height:67px;box-sizing:border-box;align-items:center;padding:0 36px 0 31px;position:relative}
.t{display:flex;align-items:baseline;font-weight:300;font-size:22.500px;color:#555;margin-left:12px;flex:1;letter-spacing:-.2px;white-space:nowrap;margin-top:2px}
.t small{font-size:14.500px;margin-left:5px;letter-spacing:-.55px;font-weight:400;color:#555}
.ic{color:#434a52;display:flex}
.c{width:30px;height:30px;border-radius:50%;background:#5a8ba0;color:#fff;display:flex;align-items:center;justify-content:center;margin-right:13px}
.d{border-left:1px dotted #ccc;height:34px;padding-left:10px;margin-top:3px;box-sizing:content-box}
.lab{font-size:11px;line-height:13px;color:#666;white-space:nowrap}
.v{display:flex;align-items:center;gap:3px;color:#ad0d30;font-size:18px;line-height:24px;font-weight:300;white-space:nowrap}
.w1{width:114px}.w2{width:86px}
.bars{display:flex;align-items:flex-end;gap:2px;height:26px;margin-top:2px}
.bars i{display:block;width:5px;background:#ad0d30}`,
`<span class="ic">${svg("home",32)}</span><div class="t">Member Centre<small>Community Info Hub</small></div>
<div class="c">${svg("chart",14)}</div>
<div class="d w1"><div class="lab">SEARCH RESULTS</div><div class="v">${svg("search",19)}1,979</div></div>
<div class="d w2"><div class="lab">TREND</div><div class="v">${svg("acdown",17)}23%</div></div>
<div class="bars">${[12,5,19,22,18,21,5,5,1,26,21,7].map(h=>`<i style="height:${h}px"></i>`).join("")}</div>`);

def("mc-panel",`:host{display:grid;grid-template-columns:1071px 524px;column-gap:30px;flex:1;min-height:0;margin:0 6px 0 15px;padding:9px 0 0 8px;background:#fafafa;border:1px solid #e6e6e6;border-bottom:0;border-radius:2px 2px 0 0;overflow:hidden}`,`<slot></slot>`);
def("mc-card",`:host{display:block;background:#fff;border:1px solid #e6e6e6;border-radius:2px;padding:0 4px 0 6px;box-sizing:border-box;height:760px}`,`<slot></slot>`);
def("mc-rightcol",`:host{display:flex;flex-direction:column;gap:21px;min-height:0}`,`<slot></slot>`);

def("mc-userinfo",`:host{display:grid;grid-template-columns:361px 361px 1fr;height:165px;box-sizing:border-box;color:#777;font-size:13px}
.c2{grid-column:2;padding-top:34px;display:flex;flex-direction:column;color:#888}
.c2 .r1{display:flex;height:30px;align-items:center;}
.ad{margin-left:108px;font-size:16.500px;font-weight:300;color:#999;margin-top:-6px}
.c3{grid-column:3;padding-top:36px;white-space:nowrap}
.l{display:flex;align-items:center;height:16px;gap:2px}
.l b{font-weight:700}
.t{display:flex;align-items:center;height:16px;padding-left:20px;position:relative;color:#888}
.t:before{content:"";position:absolute;left:4px;top:1px;bottom:1px;border-left:1px solid #888}
.t:after{content:"";position:absolute;left:4px;top:8px;width:5px;border-top:1px solid #888}
.t.e:before{top:2px;bottom:6px}.t.e:after{top:10px}
.t b{color:#666;font-weight:700;margin-left:4px}
.bs{display:flex;gap:3px;margin-top:11px}
.bt{display:flex;align-items:center;gap:2px;height:21px;box-sizing:border-box;border:1px solid #ccc;border-bottom-width:2px;border-radius:2px;padding:0 4px 0 5px;font-size:12px;color:#444;background:#fff}`,
`<div class="c2"><div class="r1">${svg("user",26)}<span class="ad">Admin</span></div><div class="r1" style="height:20px;padding-left:0;margin-left:-1px">${svg("mobile",17)}</div><div class="r1" style="height:20px;margin-top:10px;padding-left:4px">${svg("mail",13)}</div></div>
<div class="c3"><div class="l">${svg("lock",14)}<span>Last Login: <b>Success</b></span></div>
<div class="t" style="margin-top:13px">at <b>5:07PM on 21-Dec-2022</b></div><div class="t e" style="margin-top:1px">from IP Address</div>
<div class="bs"><div class="bt">${svg("edit",12)}Update your details</div><div class="bt">${svg("edit",12)}Enable two factor</div></div></div>`);

def("mc-features",`:host{display:grid;grid-template-columns:repeat(4,1fr);column-gap:11px;height:251px}`,`<slot></slot>`);
def("mc-feature",`:host{display:flex;flex-direction:column;box-sizing:border-box;border:1px solid #e4e4e4;border-bottom-width:2px;border-radius:2px;padding:9px 26px 0 32px;background:#fff}
.i{display:flex;justify-content:center;color:#666;height:44px;align-items:center;margin-left:-32px;margin-right:-26px}
h3{margin:11px -26px 0 -32px;font:300 19px/24px "Open Sans",sans-serif;color:#444;text-align:center;letter-spacing:-.1px;white-space:nowrap}
.ls{margin-top:28px;display:flex;flex-direction:column;gap:10px}
::slotted(a){display:block;font-size:13px;line-height:18.500px;color:#2878b4}`,
e=>`<div class="i">${svg(A(e,"icon"),A(e,"icon")==="truck"?40:42)}</div><h3>${A(e,"title")}</h3><div class="ls"><slot></slot></div>`);

def("mc-tools",`:host{display:block;padding:0 5px 0 7px}
h2{margin:0;font:300 22.500px/30px "Open Sans",sans-serif;color:#444;padding-top:40px;height:30px;margin-bottom:7px;margin-top:-1px}
.g{display:grid;grid-template-columns:repeat(6,1fr);column-gap:26.200px;row-gap:20px;grid-auto-rows:126px}`,
e=>`<h2>${A(e,"heading")}</h2><div class="g"><slot></slot></div>`);
def("mc-tile",`:host{display:flex;flex-direction:column;align-items:center;box-sizing:border-box;border:1px solid #e4e4e4;border-bottom-width:3px;border-radius:2px;padding-top:18px;color:#666;background:#fff;min-width:0}
.i{height:48px;display:flex;align-items:center;justify-content:center}
.l{margin-top:21px;font-size:14px;line-height:20px;text-align:center;white-space:nowrap}
.inf{color:#c5c5c5;vertical-align:-1.500px;margin-left:2px}
:host([wrap]) .l{margin-top:15px}
:host([wrap]) .inf{display:block;margin:3px auto 0}`,
e=>`<div class="i">${svg(A(e,"icon"),48)}</div><div class="l"><slot></slot> ${svg("info",14,'class="inf"')}</div>`);

def("mc-stats",`:host{display:grid;grid-template-columns:repeat(3,167px);column-gap:6px;row-gap:21px;grid-auto-rows:69px}`,`<slot></slot>`);
def("mc-stat",`:host{display:flex;box-sizing:border-box;background:#fff;border:1px solid #e4e4e4;box-shadow:0 1px 1px rgba(0,0,0,.06);border-radius:2px;padding:9px 0 0 9px;gap:8px}
.c{width:42px;height:42px;border-radius:50%;color:#fff;display:flex;align-items:center;justify-content:center;flex:none}
.n{font-weight:700;font-size:19px;line-height:20px;color:#000;display:flex;align-items:flex-start;gap:4px;height:20px}
.l{font-size:12.500px;line-height:18px;color:#333;margin-top:3px;white-space:nowrap}
.bd{font-weight:400;font-size:9px;line-height:13px;background:#999;color:#ddd;border-radius:6px;min-width:11px;padding:0 2px;box-sizing:border-box;text-align:center;margin-top:0}
.empty .l{margin-top:-2px}`,
e=>{const n=A(e,"num"),b=A(e,"badges");const ic=A(e,"icon");return `<div class="c" style="background:${A(e,"color")}">${svg(ic,ic==="users"?29:ic==="sitemap"?25:24)}</div><div class="${n?"":"empty"}">${n?`<div class="n">${n}${b?b.split(",").map(x=>`<span class="bd">${x}</span>`).join(""):""}</div>`:""}<div class="l"><slot></slot></div></div>`});

def("mc-recent",`:host{display:flex;flex-direction:column;box-sizing:border-box;height:460px;background:#fff;border:1px solid #e4e4e4;border-radius:2px;box-shadow:0 1px 1px rgba(0,0,0,.06);padding:0 14px 14px}
h2{margin:0;height:45px;font:400 18px/55px "Open Sans",sans-serif;color:#333;flex:none}
.w{display:flex;flex:1;min-height:0}
.l{flex:1;display:flex;flex-direction:column;gap:4.700px;overflow:hidden;min-width:0}
.sb{width:17px;flex:none;background:#f1f1f1;display:flex;flex-direction:column}
.up{height:17px;display:flex;align-items:center;justify-content:center;color:#555}
.th{height:226px;background:#c4c4c4}`,
e=>`<h2>${A(e,"heading")}</h2><div class="w"><div class="l"><slot></slot></div><div class="sb"><div class="up"><svg width="9" height="6" viewBox="0 0 9 6" fill="none" stroke="#555" stroke-width="1.600"><path d="M1 5l3.500-3.500L8 5"/></svg></div><div class="th"></div></div></div>`);

def("mc-update",`:host{display:block;flex:none;box-sizing:border-box;height:57px;background:#fff;border:1px solid #e8e8e8;border-bottom-width:2px;border-right:0;position:relative;padding:6px 8px 0 37px;color:#333;font-size:13px;line-height:20px;white-space:nowrap}
.i{position:absolute;left:12px;top:9px;color:#333;display:flex}
a{color:#2878b4}.r{display:inline-block}
.t{text-align:right;font-style:italic;color:#444;margin-top:6px;margin-right:1px}`,
e=>{const l=A(e,"lead"),g=A(e,"gap"),k=A(e,"link"),tm=A(e,"time");return `<span class="i">${svg(A(e,"icon"),18)}</span>${l?`<a>${l}</a><span class="r" style="width:${g}px"></span>`:""}${k?`<a>${k}</a> `:""}<slot></slot>${tm?`<div class="t">${tm}</div>`:""}`});

def("mc-tooltip",`:host{position:absolute;left:675px;top:776px;width:448px;height:200px;box-sizing:border-box;background:#fff;border:1px solid #ccc;border-radius:3px;box-shadow:0 5px 10px rgba(0,0,0,.2);padding:7px 6px;color:#666;font-size:13px;line-height:18.400px;z-index:5}
.ar{position:absolute;left:215px;top:-7px;width:12px;height:12px;background:#fff;border:1px solid #ccc;border-right:0;border-bottom:0;transform:rotate(45deg)}
::slotted(p){margin:0 0 9px}
::slotted(ol){margin:0 0 9px;padding-left:35px}`,
`<div class="ar"></div><slot></slot>`);

def("mc-help",`:host{position:absolute;right:0;top:860px;width:112px;height:36px;box-sizing:border-box;background:#d14905;color:#fff;font-weight:700;font-size:14px;border-radius:18px 0 0 18px;display:flex;align-items:center;padding-left:12px;white-space:nowrap;z-index:6}`,`<slot></slot>`);

def("mc-highlight",`:host{position:absolute;left:0;top:0;width:1895px;height:901px;pointer-events:none;mix-blend-mode:multiply;z-index:10;display:block}`,
`<svg width="1895" height="901"><path fill="#ff0" d="M805 662 L830 660 L900 658 L961 661 L961 698 L956 704 L961 708 L961 765 L955 775 L935 778 L893 784 L840 790 L806 788 L806 735 L807 700 Z"/></svg>`);
</script>
</body></html>
